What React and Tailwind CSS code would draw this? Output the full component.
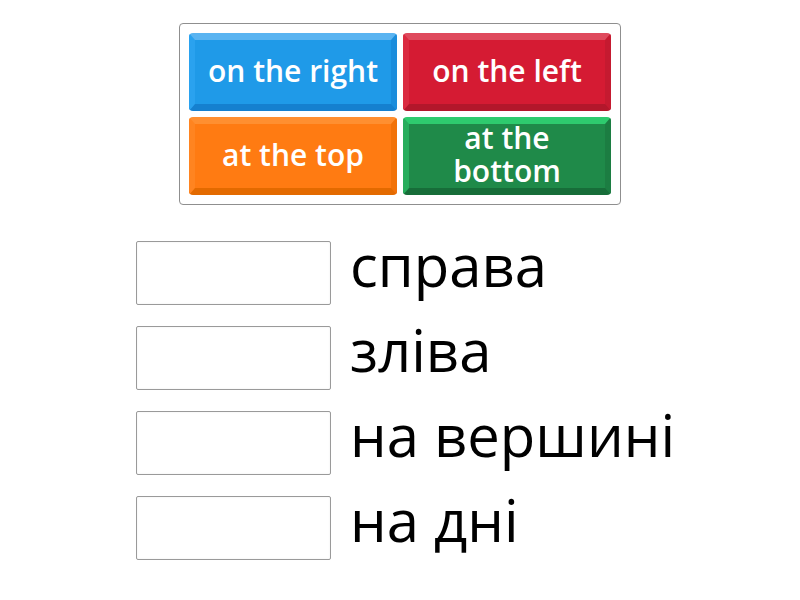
const tiles = [
  { label: 'on the right', cls: 'bg-[#1f9ae8] border-t-[#5ab4f1] border-l-[#2aa2ef] border-r-[#1a8ddc] border-b-[#1580cf]' },
  { label: 'on the left', cls: 'bg-[#d51b33] border-t-[#df4a5d] border-l-[#db2a40] border-r-[#c51a30] border-b-[#b3172b]' },
  { label: 'at the top', cls: 'bg-[#ff7b12] border-t-[#ff8f30] border-l-[#ff8420] border-r-[#f27208] border-b-[#e36a00]' },
  { label: 'at the bottom', cls: 'bg-[#1f8a49] border-t-[#2ecb6e] border-l-[#27ad5c] border-r-[#1c7d42] border-b-[#176d39]' },
]

const rows = ['справа', 'зліва', 'на вершині', 'на дні']

export default function App() {
  return (
    <div className="w-[800px] h-[600px] bg-white font-['Open_Sans',sans-serif] overflow-hidden">
      <div className="pt-[23px] flex justify-center">
        <div className="w-[442px] border border-[#8f8f8f] rounded-[4px] p-[9px] grid grid-cols-2 gap-[6px]">
          {tiles.map(t => (
            <div key={t.label}
              className={`h-[78px] rounded-[4px] border-t-[7px] border-b-[7px] border-x-[6px] flex items-center justify-center text-center text-white text-[30px] font-semibold leading-[33px] px-1 pb-[4px] ${t.cls}`}>
              {t.label}
            </div>
          ))}
        </div>
      </div>

      <div className="pl-[136px] pt-[36px] flex flex-col gap-[21px]">
        {rows.map(r => (
          <div key={r} className="flex gap-[19px]">
            <div className="w-[195px] h-[64px] border border-[#9a9a9a] rounded-[2px] bg-white shadow-[inset_0_0_2px_rgba(0,0,0,0.08)]" />
            <span className="text-[58px] leading-[48px] text-black">{r}</span>
          </div>
        ))}
      </div>
    </div>
  )
}
